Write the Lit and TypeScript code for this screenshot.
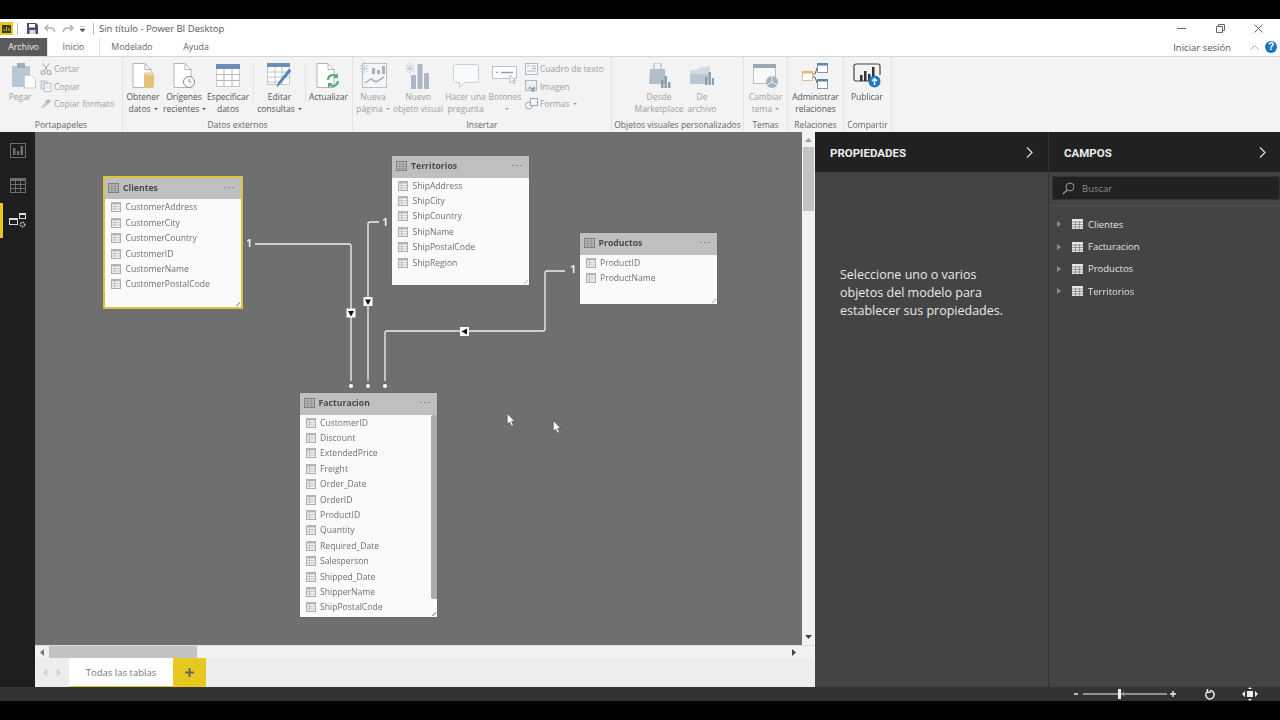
import { LitElement, html, css, TemplateResult } from "lit";
import { customElement } from "lit/decorators.js";

const caret = html`<span class="caret"></span>`;

const fieldIcon = html`<svg class="fi" width="10" height="10" viewBox="0 0 10 10"><rect x=".5" y=".5" width="9" height="9" fill="#f4f4f4" stroke="#a9a9a9"/><rect x="0" y="0" width="10" height="2.4" fill="#b4b4b4"/><path d="M0 4.6H10M0 7H10M3.6 2V10" stroke="#b8b8b8" stroke-width=".8"/></svg>`;
const headIcon = html`<svg class="hi" width="11" height="10" viewBox="0 0 11 10"><rect x=".5" y=".5" width="10" height="9" fill="none" stroke="#7d7d7d"/><path d="M0 3.2H11M0 5.5H11M0 7.7H11M3.8 0V10M7.2 0V10" stroke="#8a8a8a" stroke-width=".8"/></svg>`;
const dots = html`<span class="dots"><i></i><i></i><i></i></span>`;

const icons = {
  pegar: html`<svg width="32" height="26" viewBox="-8 0 32 26"><rect x="0" y="3" width="18" height="21" fill="#b9c6d4"/><rect x="5" y="0" width="8" height="5" fill="#9dacbc"/><path d="M12.5 12.5h7l4 4v8.5h-11z" fill="#fff" stroke="#c5ccd4"/></svg>`,
  cut: html`<svg width="12" height="13" viewBox="0 0 12 13"><path d="M2.5 1L8 9M9.5 1L4 9" stroke="#a3aeba" fill="none"/><circle cx="3" cy="10.5" r="2" fill="none" stroke="#a3aeba" stroke-width="1.2"/><circle cx="9" cy="10.5" r="2" fill="none" stroke="#a3aeba" stroke-width="1.2"/></svg>`,
  copy: html`<svg width="12" height="12" viewBox="0 0 12 12"><rect x="1" y="1" width="6" height="8" fill="#d8dfe6" stroke="#bcc6d0"/><rect x="4.5" y="3.5" width="6.5" height="8" fill="#fff" stroke="#b5bfca"/><path d="M6 6h3.5M6 8h3.5" stroke="#c5ced7"/></svg>`,
  brush: html`<svg width="13" height="11" viewBox="0 0 13 11"><path d="M6 4l3-3 3 2-3 3z" fill="#a9b6c3"/><path d="M1 10c2-1 3-3 5-6l3 2c-2 3-5 4-8 4z" fill="#c6cfd8"/></svg>`,
  obtener: html`<svg width="23" height="26" viewBox="0 0 23 26"><path d="M1 .5h12l6 6v18H1z" fill="#fff" stroke="#b5b5b5"/><path d="M13 .5v6h6" fill="none" stroke="#b5b5b5"/><path d="M12 10h10v14c-2 1.500-8 1.500-10 0z" fill="#e4c27c"/><ellipse cx="17" cy="10.500" rx="5" ry="1.800" fill="#eed9a8"/></svg>`,
  origen: html`<svg width="23" height="26" viewBox="0 0 23 26"><path d="M1 .5h11l6 6v18H1z" fill="#fff" stroke="#b5b5b5"/><path d="M12 .5v6h6" fill="none" stroke="#b5b5b5"/><circle cx="16" cy="19" r="5.500" fill="#fff" stroke="#8b8b8b"/><path d="M16 15.500V19h2.500" fill="none" stroke="#8b8b8b"/></svg>`,
  especificar: html`<svg width="24" height="23" viewBox="0 0 24 23"><rect x=".5" y=".5" width="23" height="22" fill="#fff" stroke="#c8c8c8"/><rect width="24" height="5" fill="#6d8fb3"/><path d="M0 10.500H24M0 16.500H24M8 5V23M16 5V23" stroke="#b9b9b9"/></svg>`,
  editar: html`<svg width="26" height="25" viewBox="0 0 26 25"><rect x=".5" y=".5" width="22" height="21" fill="#fff" stroke="#c8c8c8"/><rect width="23" height="4" fill="#6d8fb3"/><path d="M0 9H23M0 14H23M0 19H15M8 4V22M15 4V22" stroke="#c2c2c2"/><path d="M24 8l-11 13-3 3 1-4L22 6z" fill="#4a87c4" stroke="#4a87c4" stroke-width=".6"/></svg>`,
  actualizar: html`<svg width="25" height="25" viewBox="0 0 25 25"><path d="M1 .5h11l6 6v18H1z" fill="#fff" stroke="#b5b5b5"/><path d="M12 .5v6h6" fill="none" stroke="#b5b5b5"/><path d="M12 17a5 5 0 0 1 9-3M22 18a5 5 0 0 1-9 3" fill="none" stroke="#5aa772" stroke-width="2"/><path d="M22 10v5h-5zM12 25v-5h5z" fill="#5aa772"/></svg>`,
  nueva: html`<svg width="27" height="27" viewBox="0 0 27 27"><rect x="2.500" y="1.500" width="24" height="24" fill="#f4f6f8" stroke="#b4c0cb"/><path d="M0 3l8 7M8 3l-8 7M4 0v12M0 6.500h8" stroke="#c3ccd4"/><path d="M12 6h3v6h-3zM17 8h3v4h-3zM22 4h3v8h-3z" fill="#a7b3bf"/><path d="M5 21l6-4 5 3 8-5" fill="none" stroke="#a7b3bf" stroke-width="1.500"/></svg>`,
  visual: html`<svg width="24" height="27" viewBox="0 0 24 27"><path d="M0 3l8 7M8 3l-8 7M4 0v12M0 6.500h8" stroke="#c3ccd4"/><path d="M5 13h5v14H5zM11.500 2h5v25h-5zM18 11h5v16h-5z" fill="#abb7c3"/></svg>`,
  pregunta: html`<svg width="26" height="24" viewBox="0 0 26 24"><path d="M2 .5h21a2 2 0 0 1 2 2v14a2 2 0 0 1-2 2H11l-5 5v-5H2a2 2 0 0 1-2-2v-14a2 2 0 0 1 2-2z" transform="translate(.5)" fill="#f8fafc" stroke="#c2d0dc"/></svg>`,
  botones: html`<svg width="26" height="19" viewBox="0 0 26 19"><rect x=".5" y=".5" width="24" height="12" fill="#fff" stroke="#b7c3ce"/><path d="M9 6.500h12" stroke="#8f9ead" stroke-width="1.500"/><path d="M4 6.500h2" stroke="#a7b4c0" stroke-width="1.500"/><path d="M18 9v8l2-2 2 3 1-1-2-2.500h2.500z" fill="#fff" stroke="#98a6b3" stroke-width=".7"/></svg>`,
  cuadro: html`<svg width="13" height="12" viewBox="0 0 13 12"><rect x=".5" y=".5" width="12" height="11" fill="#f8f9fb" stroke="#adb9c5"/><path d="M2 3h3M7 3h4M7 5.500h4M2 8h9" stroke="#a2afbc"/></svg>`,
  imagen: html`<svg width="13" height="12" viewBox="0 0 13 12"><rect x=".5" y=".5" width="11" height="10" fill="#eef1f4" stroke="#adb9c5"/><path d="M2 9l3-3 2 2 2-2 2 3z" fill="#a8b5c2"/><circle cx="8" cy="10" r="2" fill="#93a2b1"/></svg>`,
  formas: html`<svg width="13" height="12" viewBox="0 0 13 12"><circle cx="4" cy="7.500" r="3.500" fill="#f5f7f9" stroke="#98a6b3"/><rect x="5.500" y=".5" width="7" height="7" fill="#f5f7f9" stroke="#98a6b3"/></svg>`,
  market: html`<svg width="23" height="26" viewBox="0 0 23 26"><path d="M2 6h15l1 15H1z" fill="#b2bfcb"/><path d="M6 7V3a3.500 3.500 0 0 1 7 0v4" fill="none" stroke="#b2bfcb" stroke-width="1.300"/><path d="M13 17h2.500v8H13zM16.500 13H19v12h-2.500zM20 19h2.500v6H20z" fill="#8f9eac"/></svg>`,
  archivo: html`<svg width="24" height="19" viewBox="0 0 24 19"><path d="M0 4h7l2-2 11-2v5L15 17H0z" fill="#d3dae1"/><path d="M0 8h20l-3 10H0z" fill="#bac6d1"/><path d="M15 11h2.500v8H15zM18.500 6H21v13h-2.500zM22 12h2v7h-2z" fill="#8f9eac"/></svg>`,
  tema: html`<svg width="26" height="24" viewBox="0 0 26 24"><rect x=".5" y=".5" width="22" height="19" fill="#f8f9fb" stroke="#b4bec8"/><rect width="23" height="4" fill="#9aa7b4"/><circle cx="19" cy="18" r="6" fill="#a5b1bc"/><path d="M19 18v-6M19 18l5 3M19 18l-5 3" stroke="#eef1f4"/></svg>`,
  rel: html`<svg width="27" height="26" viewBox="0 0 27 26"><rect x="15.500" y=".5" width="10" height="9" fill="#fff" stroke="#7d99b5"/><rect x="15" y="0" width="11" height="2.500" fill="#5f86ac"/><rect x="15.500" y="16.500" width="10" height="9" fill="#fff" stroke="#7d99b5"/><rect x="15" y="16" width="11" height="2.500" fill="#5f86ac"/><rect x=".5" y="8.500" width="10" height="9" fill="#fff" stroke="#d8bd92"/><rect x="0" y="8" width="11" height="2.500" fill="#e0b87a"/><path d="M11 11h2l2-6M11 14h2l2 6" fill="none" stroke="#666"/></svg>`,
  publicar: html`<svg width="28" height="25" viewBox="0 0 28 25"><path d="M20 18H3a2 2 0 0 1-2-2V3a2 2 0 0 1 2-2h22a2 2 0 0 1 2 2v9" fill="none" stroke="#444" stroke-width="1.200"/><path d="M7 12h2.500v6H7zM11 8h2.500v10H11zM15 11h2.500v7H15zM19 4h2.500v11H19z" fill="#333"/><circle cx="21.500" cy="18.500" r="6" fill="#1f78c1"/><path d="M21.500 22v-6M19 18l2.500-2.500L24 18" fill="none" stroke="#fff" stroke-width="1.500"/></svg>`,
};

interface Field { x: number; y: number; w: number; h: number; title: string; fields: string[]; sel?: boolean; scroll?: boolean }
const OX = 35, OY = 132;
const tables: Field[] = [
  { x: 103, y: 176, w: 140, h: 133, title: "Clientes", sel: true, fields: ["CustomerAddress", "CustomerCity", "CustomerCountry", "CustomerID", "CustomerName", "CustomerPostalCode"] },
  { x: 392, y: 156, w: 137, h: 129, title: "Territorios", fields: ["ShipAddress", "ShipCity", "ShipCountry", "ShipName", "ShipPostalCode", "ShipRegion"] },
  { x: 579.5, y: 233, w: 137, h: 71, title: "Productos", fields: ["ProductID", "ProductName"] },
  { x: 299.5, y: 393, w: 137, h: 224, title: "Facturacion", scroll: true, fields: ["CustomerID", "Discount", "ExtendedPrice", "Freight", "Order_Date", "OrderID", "ProductID", "Quantity", "Required_Date", "Salesperson", "Shipped_Date", "ShipperName", "ShipPostalCode"] },
];

const btn = (icon: TemplateResult, w: number, l1: string, l2: string, off = true, hasCaret = false) => html`
  <div class="btn ${off ? "off" : ""}" style="width:${w}px">
    <div class="bi">${icon}</div>
    <div class="bl">${l1}<br />${l2}${hasCaret ? caret : ""}</div>
  </div>`;
const small = (icon: TemplateResult, t: string, hasCaret = false) => html`
  <div class="sm"><span class="si">${icon}</span><span>${t}</span>${hasCaret ? caret : ""}</div>`;

@customElement("app-root")
export class AppRoot extends LitElement {
  static styles = css`
    :host { display: block; width: 1280px; height: 720px; background: #000; padding: 19px 0; box-sizing: border-box; overflow: hidden; font-family: "Open Sans", "Liberation Sans", sans-serif; }
    .win { height: 682px; display: flex; flex-direction: column; filter: blur(0.45px); }
    .title { height: 19px; background: #fff; display: flex; align-items: center; color: #555; font-size: 9.500px; }
    .logo { width: 13px; height: 13px; background: #e9c81e; display: flex; align-items: center; justify-content: center; }
    .vs { width: 1px; height: 12px; background: #bbb; margin: 0 6px 0 4px; }
    .vs.b { margin: 0 5px 0 8px; }
    .qa { display: flex; align-items: center; gap: 6px; margin-left: 3px; }
    .ttl { color: #555; flex: 1; padding-bottom: 1px; }
    .wc { display: flex; width: 86px; justify-content: space-between; margin-right: 17px; }
    .tabs { height: 18px; background: #fff; display: flex; align-items: stretch; font-size: 8.800px; color: #666; position: relative; }
    .tab { display: flex; align-items: center; justify-content: center; }
    .tab.file { width: 47px; background: #5a5a5a; color: #eee; }
    .tab.on { width: 53px; border-left: 1px solid #e4e4e4; border-right: 1px solid #e4e4e4; box-sizing: border-box; }
    .tab.m { width: 64px; } .tab.a { width: 64px; }
    .tabs .sp { flex: 1; }
    .login { display: flex; align-items: center; font-size: 9.500px; color: #555; margin-right: 3px; }
    .chev { margin-left: 19px; margin-right: 6px; display: flex; }
    .help { width: 12px; height: 12px; border-radius: 50%; background: #1b75bc; color: #fff; font: bold 10px/12px "Liberation Sans", sans-serif; text-align: center; }
    .ribbon { height: 76px; box-sizing: border-box; background: #f3f3f3; border-top: 1px solid #d6d6d6; display: flex; font-size: 8.500px; color: #9a9a9a; }
    .grp { display: flex; flex-direction: column; border-right: 1px solid #e3e3e3; box-sizing: border-box; }
    .items { flex: 1; display: flex; padding-top: 3px; min-height: 0; }
    .gl { height: 14px; line-height: 13px; text-align: center; color: #666; white-space: nowrap; font-size: 8.500px; }
    .btn { text-align: center; flex: none; color: #555; }
    .btn.off { color: #a0a0a0; }
    .bi { height: 31px; display: flex; align-items: center; justify-content: center; }
    .bl { line-height: 11.500px; white-space: nowrap; }
    .caret { display: inline-block; border: 2px solid transparent; border-top: 2.500px solid currentColor; border-bottom: 0; margin-left: 3px; vertical-align: 2px; }
    .col { display: flex; flex-direction: column; flex: none; }
    .col.a { margin-left: -2px; }
    .col.b { margin-left: 2px; }
    .sm { height: 17.500px; display: flex; align-items: center; white-space: nowrap; color: #a0a0a0; }
    .si { display: flex; width: 15px; justify-content: center; margin-right: 1px; }
    .vsep { width: 1px; background: #e3e3e3; margin: 2px 0 16px; flex: none; }
    .vsep.l { margin-left: 2px; }
    .items.pad { padding-left: 22px; }
    .g1 { width: 123px; } .g2 { width: 230px; } .g3 { width: 259px; } .g4 { width: 132px; } .g5 { width: 44px; } .g6 { width: 56px; } .g7 { width: 48px; }
    .main { flex: 1; display: flex; min-height: 0; }
    .nav { width: 35px; background: #1e1e1e; display: flex; flex-direction: column; flex: none; padding-top: 1px; box-sizing: border-box; }
    .nv { height: 35px; display: flex; align-items: center; justify-content: center; box-sizing: border-box; }
    .nv.on { border-left: 3px solid #e6c81e; padding-right: 3px; }
    .center { width: 780px; flex: none; display: flex; flex-direction: column; }
    .top { flex: 1; display: flex; min-height: 0; }
    .canvas { width: 767px; flex: none; background: #6f6f6f; position: relative; overflow: hidden; }
    .lines { position: absolute; left: 0; top: 0; }
    .lines text { font: bold 10px "Open Sans", sans-serif; fill: #eee; text-anchor: middle; }
    .tbl { position: absolute; background: #fafafa; box-sizing: border-box; display: flex; flex-direction: column; box-shadow: 0 0 1px #555; }
    .tbl.sel { border: 2px solid #d9c53c; }
    .th { height: 22px; flex: none; background: #bfbfbf; display: flex; align-items: center; padding: 0 7px 3px 4px; box-sizing: border-box; font-size: 8.700px; font-weight: 700; color: #4a4a4a; }
    .sel .th { height: 21px; padding-left: 3px; padding-bottom: 2px; }
    .hi { margin-right: 4px; flex: none; }
    .dots { margin-left: auto; display: flex; gap: 2px; }
    .dots i { width: 2px; height: 1.500px; background: #8a8a8a; }
    .tb { padding: 0 0 0 6px; font-size: 8.600px; color: #707070; }
    .sel .tb { padding-top: .8px; }
    .tr { height: 15.400px; display: flex; align-items: center; white-space: nowrap; }
    .fi { margin-right: 4.500px; flex: none; }
    .sb { position: absolute; right: 0; top: 22px; width: 6px; height: 184px; background: #ababab; border-radius: 2px 0 0 2px; }
    .grip { position: absolute; right: 1px; bottom: 1px; width: 5px; height: 5px; background: linear-gradient(135deg, transparent 55%, #aaa 55%, #aaa 70%, transparent 70%); }
    .cursor { position: absolute; }
    .vbar { width: 13px; flex: none; background: #f2f2f2; display: flex; flex-direction: column; align-items: center; }
    .vthumb { width: 11px; height: 64px; background: #c2c2c2; }
    .up { height: 15px; display: flex; align-items: center; }
    .dn { margin-top: auto; height: 16px; display: flex; align-items: center; }
    .hbar { height: 12px; background: #f2f2f2; display: flex; align-items: center; flex: none; border-top: 1px solid #ddd; box-sizing: content-box; }
    .hl { width: 14px; display: flex; justify-content: center; }
    .hthumb { width: 148px; height: 12px; background: #c2c2c2; }
    .hr { margin-left: 595px; display: flex; }
    .pages { height: 29px; flex: none; background: #ededed; display: flex; }
    .pn { width: 34px; display: flex; align-items: center; justify-content: space-around; padding: 0 3px; box-sizing: border-box; }
    .ptab { width: 104px; background: #fff; border-bottom: 1px solid #d9c53c; box-sizing: border-box; display: flex; align-items: center; justify-content: center; font-size: 9.500px; color: #777; }
    .padd { width: 33px; background: #e6c81e; color: #666; display: flex; align-items: center; justify-content: center; }
    .panel { background: #444; flex: none; display: flex; flex-direction: column; color: #eee; }
    .panel.p { width: 233px; border-right: 1px solid #333; box-sizing: content-box; }
    .panel.f { width: 231px; }
    .ph { height: 40px; background: #212121; display: flex; align-items: center; justify-content: space-between; padding: 1px 14px 0 15px; box-sizing: border-box; font: 700 11.500px "Roboto", sans-serif; flex: none; color: #eee; }
    .p .ph { padding-right: 15px; }
    .msg { padding: 94px 0 0 25px; font-size: 12.500px; line-height: 18px; color: #eaeaea; }
    .search { margin: 4px 0 0 3px; height: 24px; background: #212121; border: 1px solid #333; box-sizing: border-box; display: flex; align-items: center; padding-left: 9px; font-size: 9.500px; color: #8c8c8c; gap: 7px; }
    .list { border-top: 1px solid #505050; margin-top: 5px; padding-top: 7px; font-size: 9.500px; color: #e4e4e4; }
    .li { height: 22.400px; display: flex; align-items: center; }
    .tw { width: 0; height: 0; margin-left: 8px; border: 3px solid transparent; border-left: 4px solid #8f8f8f; border-right: 0; margin-right: 11px; }
    .li svg { margin-right: 5px; }
    .status { height: 14px; background: #333; display: flex; align-items: center; flex: none; color: #eee; }
    .zoom { margin-left: 1074px; display: flex; align-items: center; }
  `;

  render() {
    return html`<div class="win">
      <div class="title">
        <div class="logo"><svg width="9" height="8" viewBox="0 0 9 8"><rect width="9" height="8" fill="#3a3a20"/><path d="M2 6V4M4.500 6V2M7 6V3" stroke="#e9c81e"/></svg></div>
        <span class="vs"></span>
        <div class="qa">
          <svg width="11" height="11" viewBox="0 0 11 11"><path d="M0 0h9l2 2v9H0z" fill="#4b4b78"/><rect x="2" y="1" width="6" height="3.500" fill="#fff"/><rect x="2.500" y="7" width="6" height="4" fill="#d9d9e4"/></svg>
          <svg width="12" height="10" viewBox="0 0 12 10"><path d="M4 1L1 4l3 3M1 4h6a3.500 3.500 0 0 1 3.500 4" fill="none" stroke="#a9b4bf" stroke-width="1.500"/></svg>
          <svg width="12" height="10" viewBox="0 0 12 10"><path d="M8 1l3 3-3 3M11 4H5a3.500 3.500 0 0 0-3.500 4" fill="none" stroke="#a9b4bf" stroke-width="1.500"/></svg>
          <svg width="5" height="6" viewBox="0 0 5 6"><path d="M0 0h5M0 3h5L2.500 6z" fill="#555" stroke="#555" stroke-width=".6"/></svg>
        </div>
        <span class="vs b"></span>
        <span class="ttl">Sin título - Power BI Desktop</span>
        <div class="wc">
          <svg width="9" height="9" viewBox="0 0 9 9"><path d="M0 4.500h9" stroke="#666"/></svg>
          <svg width="9" height="9" viewBox="0 0 9 9"><path d="M.5 2.500h6v6h-6zM2.500 2.500v-2h6v6h-2" fill="none" stroke="#666"/></svg>
          <svg width="9" height="9" viewBox="0 0 9 9"><path d="M.5.500l8 8M8.500.500l-8 8" stroke="#666"/></svg>
        </div>
      </div>
      <div class="tabs">
        <div class="tab file">Archivo</div>
        <div class="tab on">Inicio</div>
        <div class="tab m">Modelado</div>
        <div class="tab a">Ayuda</div>
        <div class="sp"></div>
        <div class="login">Iniciar sesión
          <span class="chev"><svg width="9" height="5" viewBox="0 0 9 5"><path d="M.5 4.500l4-4 4 4" fill="none" stroke="#aaa"/></svg></span>
          <span class="help">?</span>
        </div>
      </div>
      <div class="ribbon">
        <div class="grp g1">
          <div class="items">
            ${btn(icons.pegar, 40, "Pegar", "")}
            <div class="col a">
              ${small(icons.cut, "Cortar")}${small(icons.copy, "Copiar")}${small(icons.brush, "Copiar formato")}
            </div>
          </div>
          <div class="gl">Portapapeles</div>
        </div>
        <div class="grp g2">
          <div class="items">
            ${btn(icons.obtener, 40, "Obtener", "datos", false, true)}
            ${btn(icons.origen, 42, "Orígenes", "recientes", false, true)}
            ${btn(icons.especificar, 46, "Especificar", "datos", false)}
            <span class="vsep l"></span>
            ${btn(icons.editar, 51, "Editar", "consultas", false, true)}
            <span class="vsep"></span>
            ${btn(icons.actualizar, 45, "Actualizar", "", false)}
          </div>
          <div class="gl">Datos externos</div>
        </div>
        <div class="grp g3">
          <div class="items">
            ${btn(icons.nueva, 40, "Nueva", "página", true, true)}
            ${btn(icons.visual, 50, "Nuevo", "objeto visual")}
            ${btn(icons.pregunta, 45, "Hacer una", "pregunta")}
            ${btn(icons.botones, 34, "Botones", "", true, true)}
            <div class="col b">
              ${small(icons.cuadro, "Cuadro de texto")}${small(icons.imagen, "Imagen")}${small(icons.formas, "Formas", true)}
            </div>
          </div>
          <div class="gl">Insertar</div>
        </div>
        <div class="grp g4">
          <div class="items pad">
            ${btn(icons.market, 50, "Desde", "Marketplace")}
            ${btn(icons.archivo, 36, "De", "archivo")}
          </div>
          <div class="gl">Objetos visuales personalizados</div>
        </div>
        <div class="grp g5">
          <div class="items">${btn(icons.tema, 43, "Cambiar", "tema", true, true)}</div>
          <div class="gl">Temas</div>
        </div>
        <div class="grp g6">
          <div class="items">${btn(icons.rel, 55, "Administrar", "relaciones", false)}</div>
          <div class="gl">Relaciones</div>
        </div>
        <div class="grp g7">
          <div class="items">${btn(icons.publicar, 46, "Publicar", "", false)}</div>
          <div class="gl">Compartir</div>
        </div>
      </div>
      <div class="main">
        <div class="nav">
          <div class="nv"><svg width="16" height="15" viewBox="0 0 16 15"><rect x=".5" y=".5" width="15" height="14" fill="none" stroke="#6e6e6e"/><path d="M3 5h2.500v7H3zM6.800 8h2.500v4H6.800zM10.500 3H13v9h-2.500z" fill="#6e6e6e"/></svg></div>
          <div class="nv"><svg width="16" height="15" viewBox="0 0 16 15"><rect x=".5" y=".5" width="15" height="14" fill="none" stroke="#6e6e6e"/><rect width="16" height="3" fill="#6e6e6e"/><path d="M0 6.500h16M0 10.500h16M5.500 3v12M10.500 3v12" stroke="#6e6e6e"/></svg></div>
          <div class="nv on"><svg width="17" height="16" viewBox="0 0 17 16"><rect x=".5" y="5.500" width="8" height="6" fill="none" stroke="#ddd"/><rect y="5" width="9" height="2" fill="#ddd"/><rect x="10.500" y=".5" width="6" height="5" fill="none" stroke="#ddd"/><rect x="10" width="7" height="2" fill="#ddd"/><circle cx="13.500" cy="11.500" r="2.200" fill="none" stroke="#bbb" stroke-width="1.500" stroke-dasharray="1.500 .8"/></svg></div>
        </div>
        <div class="center">
          <div class="top">
            <div class="canvas">
              <svg class="lines" width="767" height="513" viewBox="${OX} ${OY} 767 513">
                <g fill="none" stroke="#efefef" stroke-width="1.300">
                  <path d="M255 244H349q2 0 2 2V381"/>
                  <path d="M379 222H370q-2 0-2 2V381"/>
                  <path d="M565 271H547q-2 0-2 2V329q0 2-2 2H387q-2 0-2 2V381"/>
                </g>
                <g fill="#fff">
                  <circle cx="351" cy="386" r="2"/><circle cx="368" cy="386" r="2"/><circle cx="385" cy="386" r="2"/>
                  <rect x="346.500" y="308.500" width="9" height="9"/><rect x="363.500" y="297" width="9" height="9"/><rect x="460" y="327" width="9" height="9"/>
                </g>
                <path d="M348 311h6l-3 5.500zM365 299.500h6l-3 5.500zM467 328.500v6l-5.500-3z" fill="#111"/>
                <text x="249" y="247">1</text><text x="385" y="226">1</text><text x="573" y="273">1</text>
              </svg>
              ${tables.map((t) => html`
                <div class="tbl ${t.sel ? "sel" : ""}" style="left:${t.x - OX}px;top:${t.y - OY}px;width:${t.w}px;height:${t.h}px">
                  <div class="th">${headIcon}<span>${t.title}</span>${dots}</div>
                  <div class="tb">${t.fields.map((f) => html`<div class="tr">${fieldIcon}<span>${f}</span></div>`)}</div>
                  ${t.scroll ? html`<div class="sb"></div>` : ""}
                  <div class="grip"></div>
                </div>`)}
              ${[[506, 413], [552, 420]].map(([x, y]) => html`
                <svg class="cursor" style="left:${x - OX}px;top:${y - OY}px" width="10" height="14" viewBox="0 0 9 13"><path d="M1 0.500V10.500L3.200 8.500L5 12.200L6.800 11.400L5 7.800H8z" fill="#fff" stroke="#333" stroke-width=".5"/></svg>`)}
            </div>
            <div class="vbar">
              <div class="up"><svg width="7" height="4" viewBox="0 0 7 4"><path d="M0 4l3.500-4L7 4z" fill="#999"/></svg></div>
              <div class="vthumb"></div>
              <div class="dn"><svg width="7" height="4" viewBox="0 0 7 4"><path d="M0 0l3.500 4L7 0z" fill="#444"/></svg></div>
            </div>
          </div>
          <div class="hbar">
            <div class="hl"><svg width="4" height="7" viewBox="0 0 4 7"><path d="M4 0L0 3.500 4 7z" fill="#777"/></svg></div>
            <div class="hthumb"></div>
            <div class="hr"><svg width="4" height="7" viewBox="0 0 4 7"><path d="M0 0l4 3.500L0 7z" fill="#444"/></svg></div>
          </div>
          <div class="pages">
            <div class="pn">
              <svg width="4" height="7" viewBox="0 0 4 7"><path d="M4 0L0 3.500 4 7z" fill="#ccc"/></svg>
              <svg width="4" height="7" viewBox="0 0 4 7"><path d="M0 0l4 3.500L0 7z" fill="#ccc"/></svg>
            </div>
            <div class="ptab">Todas las tablas</div>
            <div class="padd"><svg width="9" height="9" viewBox="0 0 9 9"><path d="M4.500 0v9M0 4.500h9" stroke="#666" stroke-width="2"/></svg></div>
          </div>
        </div>
        <div class="panel p">
          <div class="ph"><span>PROPIEDADES</span>
            <svg width="7" height="11" viewBox="0 0 7 11"><path d="M1 .5l5 5-5 5" fill="none" stroke="#ddd" stroke-width="1.200"/></svg></div>
          <div class="msg">Seleccione uno o varios<br />objetos del modelo para<br />establecer sus propiedades.</div>
        </div>
        <div class="panel f">
          <div class="ph"><span>CAMPOS</span>
            <svg width="7" height="11" viewBox="0 0 7 11"><path d="M1 .5l5 5-5 5" fill="none" stroke="#ddd" stroke-width="1.200"/></svg></div>
          <div class="search">
            <svg width="13" height="13" viewBox="0 0 13 13"><circle cx="8" cy="5" r="4" fill="none" stroke="#999"/><path d="M5 8l-4 4" stroke="#999" stroke-width="1.200"/></svg>
            Buscar</div>
          <div class="list">
            ${["Clientes", "Facturacion", "Productos", "Territorios"].map((n) => html`
              <div class="li"><span class="tw"></span>
                <svg width="11" height="10" viewBox="0 0 11 10"><rect width="11" height="10" fill="#e6e6e6"/><path d="M0 3h11M0 5.500h11M0 8h11M3.500 2v8M7.300 2v8" stroke="#777" stroke-width=".7"/></svg>
                ${n}</div>`)}
          </div>
        </div>
      </div>
      <div class="status">
        <svg class="zoom" width="190" height="14" viewBox="0 0 190 14">
          <g stroke="#eee" fill="none">
            <path d="M0 7h4" stroke-width="1.400"/>
            <path d="M9 7h84"/>
            <path d="M96 7h6M99 4v6" stroke-width="1.400"/>
            <path d="M136 3.500a4.200 4.200 0 1 1-3 1.200M133.500 2v3.200h3.200" stroke-width="1.500"/>
          </g>
          <rect x="44" y="2" width="3" height="10" fill="#eee"/>
          <rect x="49" y="4.500" width="1" height="5" fill="#999"/>
          <g fill="#eee"><rect x="173" y="4" width="6" height="6"/><path d="M176 0l2 2h-4zM176 14l2-2h-4zM168 7l3-3v6zM184 7l-3-3v6z"/></g>
        </svg>
      </div>
    </div>`;
  }
}
